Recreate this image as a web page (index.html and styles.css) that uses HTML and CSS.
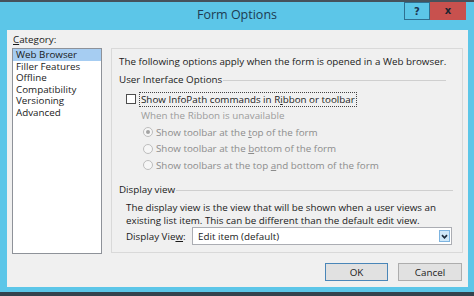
FILE: index.html
```html
<!DOCTYPE html>
<html>
<head>
<meta charset="utf-8">
<link rel="stylesheet" href="styles.css">
</head>
<body>
<div class="window">
  <div class="titlebar">
    <div class="title">Form Options</div>
    <div class="caption-buttons">
      <div class="cap-btn help">?</div>
      <div class="cap-btn close">x</div>
    </div>
  </div>
  <div class="client">
    <div class="main">
      <div class="category">
        <div class="cat-label"><u>C</u>ategory:</div>
        <ul class="listbox">
          <li class="selected">Web Browser</li>
          <li>Filler Features</li>
          <li>Offline</li>
          <li>Compatibility</li>
          <li>Versioning</li>
          <li>Advanced</li>
        </ul>
      </div>
      <div class="panel">
        <div class="intro">The following options apply when the form is opened in a Web browser.</div>
        <div class="group-head ui-head"><span>User Interface Options</span></div>
        <div class="check-row">
          <span class="checkbox"></span>
          <span class="check-label">Show InfoPath commands in R<u>i</u>bbon or toolbar</span>
        </div>
        <div class="sub-head">When the Ribbon is unavailable</div>
        <div class="radios">
          <div class="radio-row"><span class="radio checked"></span><span>Show toolbar at the <u>t</u>op of the form</span></div>
          <div class="radio-row"><span class="radio"></span><span>Show toolbar at the <u>b</u>ottom of the form</span></div>
          <div class="radio-row"><span class="radio"></span><span>Show toolbars at the top <u>a</u>nd bottom of the form</span></div>
        </div>
        <div class="group-head display-head"><span>Display view</span></div>
        <div class="desc">The display view is the view that will be shown when a user views an<br>existing list item. This can be different than the default edit view.</div>
        <div class="view-row">
          <span class="view-label">Display Vie<u>w</u>:</span>
          <div class="select">
            <span class="select-text">Edit item (default)</span>
            <span class="drop-btn"><svg width="9" height="9" viewBox="0 0 9 9"><path d="M2 3.2 L4.5 5.8 L7 3.2" fill="none" stroke="#1b2b3b" stroke-width="1.7"/></svg></span>
          </div>
        </div>
      </div>
    </div>
    <div class="footer">
      <div class="btn ok">OK</div>
      <div class="btn cancel">Cancel</div>
    </div>
  </div>
</div>
</body>
</html>
```
FILE: styles.css
```css
* { box-sizing: border-box; margin: 0; padding: 0; }
html, body { width: 474px; height: 296px; overflow: hidden; }
body {
  font-family: "Open Sans", "Noto Sans", sans-serif;
  font-size: 9.8px;
  color: #1a1a1a;
  background: #5cc6e8;
}
.window {
  width: 474px;
  height: 296px;
  display: flex;
  flex-direction: column;
  background: #5cc6e8;
  border-top: 2px solid #46525c;
  border-bottom: 4px solid #34424d;
  padding-bottom: 5px;
}
.titlebar {
  height: 28px;
  flex: none;
  display: grid;
  grid-template-columns: 1fr auto 1fr;
}
.title {
  grid-column: 2;
  font-size: 12.5px;
  color: #1d3b52;
  line-height: 16px;
  padding-top: 5px;
}
.caption-buttons {
  grid-column: 3;
  justify-self: end;
  display: flex;
  margin-right: 8px;
  height: 18px;
}
.cap-btn {
  height: 18px;
  display: flex;
  align-items: center;
  justify-content: center;
  font-family: "DejaVu Sans", sans-serif;
  font-weight: bold;
  color: #1a2530;
}
.cap-btn.help {
  width: 26px;
  border: 1px solid #2f6f90;
  font-size: 10px;
  color: #1c3550;
}
.cap-btn.close {
  width: 36px;
  background: #c8514e;
  font-size: 10px;
  padding-bottom: 2px;
}
.client {
  flex: 1;
  margin: 0 6px 0 7px;
  background: #f0f0f0;
  display: flex;
  flex-direction: column;
}
.main {
  display: flex;
  padding: 0 5px;
}
.category {
  width: 90px;
  flex: none;
}
.cat-label {
  height: 18px;
  padding: 3px 0 0 1px;
  line-height: 14px;
}
.listbox {
  list-style: none;
  height: 206px;
  border: 1px solid #8e9299;
  background: #fff;
}
.listbox li {
  height: 11.5px;
  line-height: 11.5px;
  padding-left: 3px;
  white-space: nowrap;
}
.listbox li.selected { background: #a6cdf2; }
.panel {
  flex: 1;
  margin: 18px 0 0 9px;
  height: 205px;
  border: 1px solid #d9d9d9;
  padding: 6px 9px 0 7px;
}
.intro { line-height: 14px; white-space: nowrap; }
.group-head {
  display: flex;
  align-items: center;
  line-height: 14px;
  white-space: nowrap;
}
.group-head::after {
  content: "";
  flex: 1;
  height: 1px;
  background: #cfcfcf;
  margin-left: 1px;
}
.ui-head { margin-top: 4px; margin-right: 7px; }
.check-row {
  margin-top: 5px;
  padding-left: 7px;
  display: flex;
  align-items: center;
  height: 14px;
}
.checkbox {
  width: 10px;
  height: 10px;
  border: 1px solid #4d4d4d;
  background: #fff;
  margin-right: 3px;
  flex: none;
}
.check-label {
  border: 1px dotted #444;
  line-height: 13px;
  padding: 0 1px;
  white-space: nowrap;
}
.sub-head {
  margin-top: 3px;
  padding-left: 22px;
  color: #9b9b9b;
  line-height: 14px;
}
.radios { margin-top: 1px; }
.radio-row {
  height: 16.5px;
  display: flex;
  align-items: center;
  padding-left: 24px;
  color: #8c8c8c;
  white-space: nowrap;
}
.radio {
  width: 10px;
  height: 10px;
  flex: none;
  border-radius: 50%;
  border: 1px solid #bdbdbd;
  background: #f6f6f6;
  margin-right: 3px;
  display: flex;
  align-items: center;
  justify-content: center;
}
.radio.checked::after {
  content: "";
  width: 4px;
  height: 4px;
  border-radius: 50%;
  background: #a3a3a3;
}
.display-head { margin-top: 9.5px; }
.desc {
  margin-top: 3.5px;
  padding-left: 7px;
  line-height: 13px;
  white-space: nowrap;
}
.view-row {
  display: flex;
  align-items: center;
  padding-left: 7px;
  margin-top: 0.5px;
  height: 18px;
}
.view-label { width: 66px; flex: none; }
.select {
  width: 260px;
  height: 18px;
  border: 1px solid #abadb3;
  background: #fff;
  display: flex;
  align-items: center;
  padding-left: 5px;
}
.select-text { flex: 1; }
.drop-btn {
  width: 11px;
  height: 12px;
  margin-right: 1px;
  background: #cfe8f9;
  border: 1px solid #7db4e0;
  display: flex;
  align-items: center;
  justify-content: center;
}
.footer {
  display: flex;
  justify-content: flex-end;
  gap: 10px;
  margin-top: 9px;
  padding-right: 6px;
}
.btn {
  height: 18px;
  border: 1px solid #adadad;
  background: #e1e1e1;
  display: flex;
  align-items: center;
  justify-content: center;
}
.btn.ok { width: 63px; border-color: #4a86b8; }
.btn.cancel { width: 64px; }
```
